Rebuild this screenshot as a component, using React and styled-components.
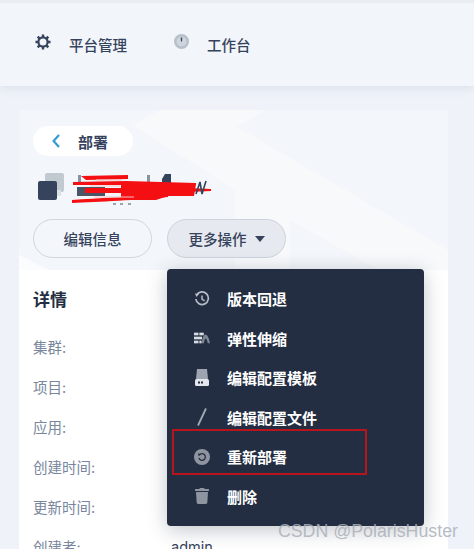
import React from "react";
import styled, { createGlobalStyle } from "styled-components";
import { FaTrash } from "react-icons/fa";

const Global = createGlobalStyle`
  html, body {
    margin: 0;
    padding: 0;
    background: #eff3f9;
    font-family: "Inter", "Noto Sans CJK SC", sans-serif;
    overflow: hidden;
  }
`;

const Page = styled.div`
  width: 474px;
  height: 549px;
  position: relative;
  overflow: hidden;
  display: flex;
  flex-direction: column;
  border-top: 3px solid #e9ecf1;
  box-sizing: border-box;
`;

const TopBar = styled.div`
  height: 83px;
  flex-shrink: 0;
  display: flex;
  align-items: center;
  padding: 0 0 0 35px;
  background: #f2f5fa;
  box-shadow: 0 3px 8px rgba(200, 208, 220, 0.45);
  box-sizing: border-box;
`;

const NavItem = styled.div`
  display: flex;
  align-items: center;
  gap: 18px;
  margin-right: 47px;
  font-size: 14.5px;
  font-weight: 500;
  color: #36435c;
  svg {
    margin-top: -6px;
  }
`;

const Card = styled.div`
  margin: 24px 26px 0 19px;
  flex: 1;
  background: #fff;
  display: flex;
  flex-direction: column;
`;

const Banner = styled.div`
  position: relative;
  height: 160px;
  flex-shrink: 0;
  padding: 16px 14px 0;
  background: #f3f6fa;
  overflow: hidden;
  box-sizing: border-box;
`;

const BannerArt = styled.svg`
  position: absolute;
  inset: 0;
  width: 100%;
  height: 100%;
`;

const BackPill = styled.div`
  position: relative;
  width: 100px;
  height: 30px;
  border-radius: 15px;
  background: #fff;
  display: flex;
  align-items: center;
  padding-left: 18px;
  gap: 17px;
  box-sizing: border-box;
  font-size: 15px;
  font-weight: 600;
  color: #36435c;
`;

const TitleRow = styled.div`
  position: relative;
  height: 41px;
  margin-top: 17px;
  padding-left: 5px;
  display: flex;
  align-items: flex-start;
`;

const Actions = styled.div`
  position: relative;
  display: flex;
  gap: 15px;
  margin-top: 5px;
`;

const PillButton = styled.button`
  width: 119px;
  height: 39px;
  padding: 0;
  border-radius: 20px;
  border: 1px solid ${(p) => (p.$active ? "#ccd3db" : "#d1d7df")};
  background: ${(p) => (p.$active ? "#e6eaf0" : "#f3f6fa")};
  color: #36435c;
  font-family: inherit;
  font-size: 14.5px;
  font-weight: 500;
  display: flex;
  align-items: center;
  justify-content: center;
  gap: 8px;
`;

const Caret = styled.span`
  width: 0;
  height: 0;
  border-left: 5.5px solid transparent;
  border-right: 5.5px solid transparent;
  border-top: 6px solid #36435c;
`;

const Details = styled.div`
  padding: 16px 14px 0;
  display: flex;
  flex-direction: column;
`;

const DetailsTitle = styled.h3`
  margin: 0 0 12px;
  font-size: 17px;
  line-height: 28px;
  font-weight: 700;
  color: #242e42;
`;

const Row = styled.div`
  height: 40px;
  display: flex;
  align-items: center;
  font-size: 14.5px;
  color: #79879c;
`;

const RowLabel = styled.span`
  width: 138px;
  flex-shrink: 0;
`;

const RowValue = styled.span`
  color: #36435c;
`;

const Menu = styled.div`
  position: absolute;
  left: 167px;
  top: 266px;
  width: 257px;
  height: 257px;
  border-radius: 4px;
  background: #242e42;
  box-shadow: 0 4px 20px rgba(36, 46, 66, 0.28);
  padding: 10px 0;
  box-sizing: border-box;
  display: flex;
  flex-direction: column;
`;

const MenuItem = styled.div`
  height: 39.6px;
  display: flex;
  align-items: center;
  padding-left: 27px;
  font-size: 15px;
  font-weight: 700;
  color: #fff;
`;

const MenuIcon = styled.span`
  width: 16px;
  height: 18px;
  margin-right: 17px;
  display: flex;
  align-items: center;
  justify-content: center;
  color: #b6bdc7;
`;

const Highlight = styled.div`
  position: absolute;
  left: 172px;
  top: 426px;
  width: 195px;
  height: 46px;
  border: 2px solid #b8141c;
  box-sizing: border-box;
`;

const Watermark = styled.div`
  position: absolute;
  right: 16px;
  top: 518px;
  font-family: "Liberation Sans", sans-serif;
  font-size: 17.8px;
  line-height: 20px;
  color: rgba(170, 176, 186, 0.85);
  white-space: nowrap;
`;

const GearIcon = () => (
  <svg width="16" height="16" viewBox="0 0 16 16">
    <circle cx="8" cy="8" r="4.6" fill="none" stroke="#36435c" strokeWidth="2.2" />
    <g stroke="#36435c" strokeWidth="2.4">
      <path d="M8 .5v2.4M8 13.1v2.4M.5 8h2.4M13.1 8h2.4M2.7 2.7l1.7 1.7M11.6 11.6l1.7 1.7M2.7 13.3l1.7-1.7M11.6 4.4l1.7-1.7" />
    </g>
  </svg>
);

const DashIcon = () => (
  <svg width="15" height="15" viewBox="0 0 15 15">
    <circle cx="7.5" cy="7.5" r="7.5" fill="#b6bfca" />
    <circle cx="7.5" cy="7.5" r="5" fill="#cfd5dc" />
    <path d="M6.7 3.5h1.6L8 7.500H7z" fill="#36435c" />
  </svg>
);

const BackIcon = () => (
  <svg width="10" height="16" viewBox="0 0 10 16">
    <path d="M8 2 2.6 8 8 14" fill="none" stroke="#329dce" strokeWidth="2.2" />
  </svg>
);

const AppIcon = () => (
  <svg width="30" height="30" viewBox="0 0 30 30">
    <rect x="7" y="0" width="19" height="19" rx="2" fill="#c1c9d1" />
    <rect x="18" y="17" width="5" height="6" fill="#dde2e8" />
    <rect x="0" y="8" width="19" height="19" rx="2" fill="#36435c" />
  </svg>
);

const HistoryIcon = () => (
  <svg width="16" height="16" viewBox="0 0 16 16" fill="none" stroke="#b6bdc7">
    <path d="M2.5 4.2A6.3 6.3 0 1 1 1.8 8" strokeWidth="1.7" />
    <path d="M.8 2.4 5 2.9 2.6 6z" fill="#b6bdc7" stroke="none" />
    <path d="M8 4.5v3.7l2.6 1.6" strokeWidth="1.5" />
  </svg>
);

const ScaleIcon = () => (
  <svg width="18" height="12" viewBox="0 0 18 12" fill="#d9dde3">
    <rect x="0" y="0" width="5" height="3" />
    <rect x="6" y="0" width="5" height="3" />
    <rect x="0" y="4.5" width="9" height="3" />
    <rect x="0" y="9" width="5" height="3" />
    <rect x="6" y="9" width="2.5" height="3" />
    <path d="M9 12C9 6 11 2 13 2s4 4 5 10h-2.5C15 9 14 6.500 13 6.500S11.500 9 11.200 12z" fill="#7f8794" />
  </svg>
);

const TemplateIcon = () => (
  <svg width="14" height="17" viewBox="0 0 14 17">
    <path d="M2 0h10l1 10H1z" fill="#9ea5b1" />
    <rect x="0" y="10" width="14" height="7" rx="1.500" fill="#e3e6ea" />
    <rect x="3" y="12.500" width="2" height="2" fill="#242e42" />
    <rect x="6" y="12.500" width="2" height="2" fill="#242e42" />
  </svg>
);

const SlashIcon = () => (
  <svg width="12" height="18" viewBox="0 0 12 18">
    <path d="M10 .5 2 17.500" stroke="#a3a9b4" strokeWidth="1.800" fill="none" />
  </svg>
);

const RedeployIcon = () => (
  <svg width="16" height="16" viewBox="0 0 16 16">
    <circle cx="8" cy="8" r="8" fill="#8f95a0" />
    <path d="M5.400 6A3.300 3.300 0 1 1 4.900 9" fill="none" stroke="#242e42" strokeWidth="1.300" />
    <path d="M4 4.300 7.200 5.300 4.600 7.300z" fill="#242e42" />
  </svg>
);

// the red scribble that hides the name
const Scribble = () => (
  <svg width="150" height="38" viewBox="0 0 150 38">
    <g fill="#8793a3">
      <rect x="10" y="2" width="3" height="9" />
      <rect x="79" y="2" width="3" height="9" />
    </g>
    <path d="M97 1h6v10h-9v-5z" fill="#36435c" />
    <rect x="9" y="14" width="28" height="9" fill="#4a5668" />
    <g fill="#f40f12">
      <path d="M13 3 60 2 60 6 18 7z" />
      <path d="M5 9 58 8 128 10 128 12 60 12 5 12z" />
      <path d="M53 11H128L126 23 100 23 88 27H53z" />
      <path d="M17 15H60V20H17z" />
      <path d="M4 27C30 25 60 24 100 22L100 24C70 27 30 29 4 30z" />
      <path d="M120 15 143 16 143 18 120 19z" />
    </g>
    <path d="M28 7H54M22 13H52M26 24H66" stroke="#f6c0c0" strokeWidth="1" fill="none" />
    <path d="M128 21 132 9 134 21 138 8" stroke="#36435c" strokeWidth="1.600" fill="none" />
    <path d="M45 31h3M52 31h3M60 31h3" stroke="#7f8a99" strokeWidth="1.500" fill="none" />
  </svg>
);

const RedactedName = styled.div`
  margin-left: 0;
  flex-shrink: 0;
`;

const menuItems = [
  { label: "版本回退", icon: <HistoryIcon /> },
  { label: "弹性伸缩", icon: <ScaleIcon /> },
  { label: "编辑配置模板", icon: <TemplateIcon /> },
  { label: "编辑配置文件", icon: <SlashIcon /> },
  { label: "重新部署", icon: <RedeployIcon /> },
  { label: "删除", icon: <FaTrash size={16} color="#8f95a0" /> },
];

const rows = [
  { label: "集群:" },
  { label: "项目:" },
  { label: "应用:" },
  { label: "创建时间:" },
  { label: "更新时间:" },
  { label: "创建者:", value: "admin" },
];

export default function App() {
  return (
    <Page>
      <Global />
      <TopBar>
        <NavItem>
          <GearIcon />
          平台管理
        </NavItem>
        <NavItem>
          <DashIcon />
          工作台
        </NavItem>
      </TopBar>
      <Card>
        <Banner>
          <BannerArt viewBox="0 0 429 160" preserveAspectRatio="none">
            <path d="M141 0 114 15 216 80V160H271V110L429 199V140L218 17 246 0z" fill="#f7f9fb" />
            <path d="M0 145 30 160H0z" fill="#fbfcfd" />
          </BannerArt>
          <BackPill>
            <BackIcon />
            部署
          </BackPill>
          <TitleRow>
            <AppIcon />
            <RedactedName>
              <Scribble />
            </RedactedName>
          </TitleRow>
          <Actions>
            <PillButton>编辑信息</PillButton>
            <PillButton $active>
              更多操作
              <Caret />
            </PillButton>
          </Actions>
        </Banner>
        <Details>
          <DetailsTitle>详情</DetailsTitle>
          {rows.map((row) => (
            <Row key={row.label}>
              <RowLabel>{row.label}</RowLabel>
              {row.value && <RowValue>{row.value}</RowValue>}
            </Row>
          ))}
        </Details>
      </Card>
      <Menu>
        {menuItems.map((item) => (
          <MenuItem key={item.label}>
            <MenuIcon>{item.icon}</MenuIcon>
            {item.label}
          </MenuItem>
        ))}
      </Menu>
      <Highlight />
      <Watermark>CSDN @PolarisHuster</Watermark>
    </Page>
  );
}
